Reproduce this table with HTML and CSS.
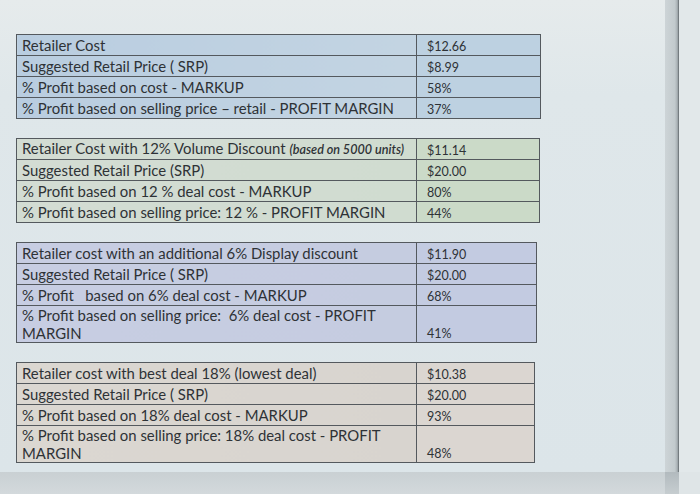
FILE: index.html
```html
<!DOCTYPE html>
<html>
<head>
<meta charset="utf-8">
<link rel="stylesheet" href="styles.css">
</head>
<body>
<div class="screen">
  <main class="sheet">
    <table class="tbl t1">
      <tr><td class="lbl">Retailer Cost</td><td class="val">$12.66</td></tr>
      <tr><td class="lbl">Suggested Retail Price ( SRP)</td><td class="val">$8.99</td></tr>
      <tr><td class="lbl">% Profit based on cost - MARKUP</td><td class="val">58%</td></tr>
      <tr><td class="lbl">% Profit based on selling price – retail - PROFIT MARGIN</td><td class="val">37%</td></tr>
    </table>
    <table class="tbl t2">
      <tr><td class="lbl">Retailer Cost with 12% Volume Discount <i class="note">(based on 5000 units)</i></td><td class="val">$11.14</td></tr>
      <tr><td class="lbl">Suggested Retail Price (SRP)</td><td class="val">$20.00</td></tr>
      <tr><td class="lbl">% Profit based on 12 % deal cost - MARKUP</td><td class="val">80%</td></tr>
      <tr><td class="lbl">% Profit based on selling price: 12 % - PROFIT MARGIN</td><td class="val">44%</td></tr>
    </table>
    <table class="tbl t3">
      <tr><td class="lbl">Retailer cost with an additional 6% Display discount</td><td class="val">$11.90</td></tr>
      <tr><td class="lbl">Suggested Retail Price ( SRP)</td><td class="val">$20.00</td></tr>
      <tr><td class="lbl">% Profit &nbsp; based on 6% deal cost - MARKUP</td><td class="val">68%</td></tr>
      <tr class="tall"><td class="lbl">% Profit based on selling price: &nbsp;6% deal cost - PROFIT MARGIN</td><td class="val">41%</td></tr>
    </table>
    <table class="tbl t4">
      <tr><td class="lbl">Retailer cost with best deal 18% (lowest deal)</td><td class="val">$10.38</td></tr>
      <tr><td class="lbl">Suggested Retail Price ( SRP)</td><td class="val">$20.00</td></tr>
      <tr><td class="lbl">% Profit based on 18% deal cost - MARKUP</td><td class="val">93%</td></tr>
      <tr class="tall"><td class="lbl">% Profit based on selling price: 18% deal cost - PROFIT MARGIN</td><td class="val">48%</td></tr>
    </table>
  </main>
  <div class="bezel"></div>
  <div class="edge"></div>
  <div class="bottom"></div>
  <div class="bottom-b"></div>
  <div class="bottom-c"></div>
</div>
</body>
</html>
```
FILE: styles.css
```css
html, body {
  margin: 0;
  padding: 0;
}
body {
  width: 700px;
  height: 494px;
  overflow: hidden;
  font-family: Lato, "Open Sans", sans-serif;
  color: #2e3236;
}
.screen {
  display: grid;
  grid-template-columns: 665px 14px 1fr;
  grid-template-rows: 472px 1fr;
  width: 700px;
  height: 494px;
}
.sheet {
  background: linear-gradient(180deg, #e6ebec 0%, #dfe7ea 20%, #dce5e9 100%);
  padding: 34px 0 0 16px;
  display: flex;
  flex-direction: column;
}
.bezel {
  background: linear-gradient(90deg, #cdd4d7 0%, #c2cacd 70%, #a8b0b4 88%, #5e6569 100%);
}
.edge {
  background: #e2e8ea;
}
.bottom {
  background: linear-gradient(180deg, #c9d0d3, #d3d9dc);
}
.bottom-b {
  background: linear-gradient(180deg, #b2babe, #c6cdd0);
}
.bottom-c {
  background: #dfe5e7;
}
.tbl {
  border-collapse: collapse;
  border: 1.5px solid #54595e;
  table-layout: fixed;
}
.tbl td {
  border: 1.5px solid #54595e;
  height: 20px;
  padding: 0;
  line-height: 18px;
  white-space: nowrap;
}
.lbl {
  width: 394px;
  padding-left: 5px !important;
  font-size: 14.9px;
  vertical-align: middle;
}
.val {
  padding-left: 10px !important;
  font-size: 12.5px;
  vertical-align: bottom;
  line-height: 16px !important;
}
.tall .lbl {
  white-space: normal;
  height: 36px;
  line-height: 18px;
  padding-right: 30px !important;
}
.note {
  font-size: 12.6px;
  font-weight: 600;
  font-style: italic;
}
.t1 { width: 525px; }
.t2 { width: 524px; margin-top: 19px; }
.t3 { width: 521px; margin-top: 19px; }
.t4 { width: 519px; margin-top: 19px; }
.t1 .lbl { background: linear-gradient(90deg, #b9cde0, #c3d4e2); }
.t1 .val { background: #bdd1e1; }
.t2 .lbl { background: linear-gradient(90deg, #d3dcd3, #d0dcd0); }
.t2 .val { background: #cbdac8; }
.t3 .lbl { background: linear-gradient(90deg, #c7cde2, #c5cce0); }
.t3 .val { background: #c3cbe1; }
.t4 .lbl { background: linear-gradient(90deg, #dbd7d1, #d8d4cf); }
.t4 .val { background: #dbd6d1; }
```
